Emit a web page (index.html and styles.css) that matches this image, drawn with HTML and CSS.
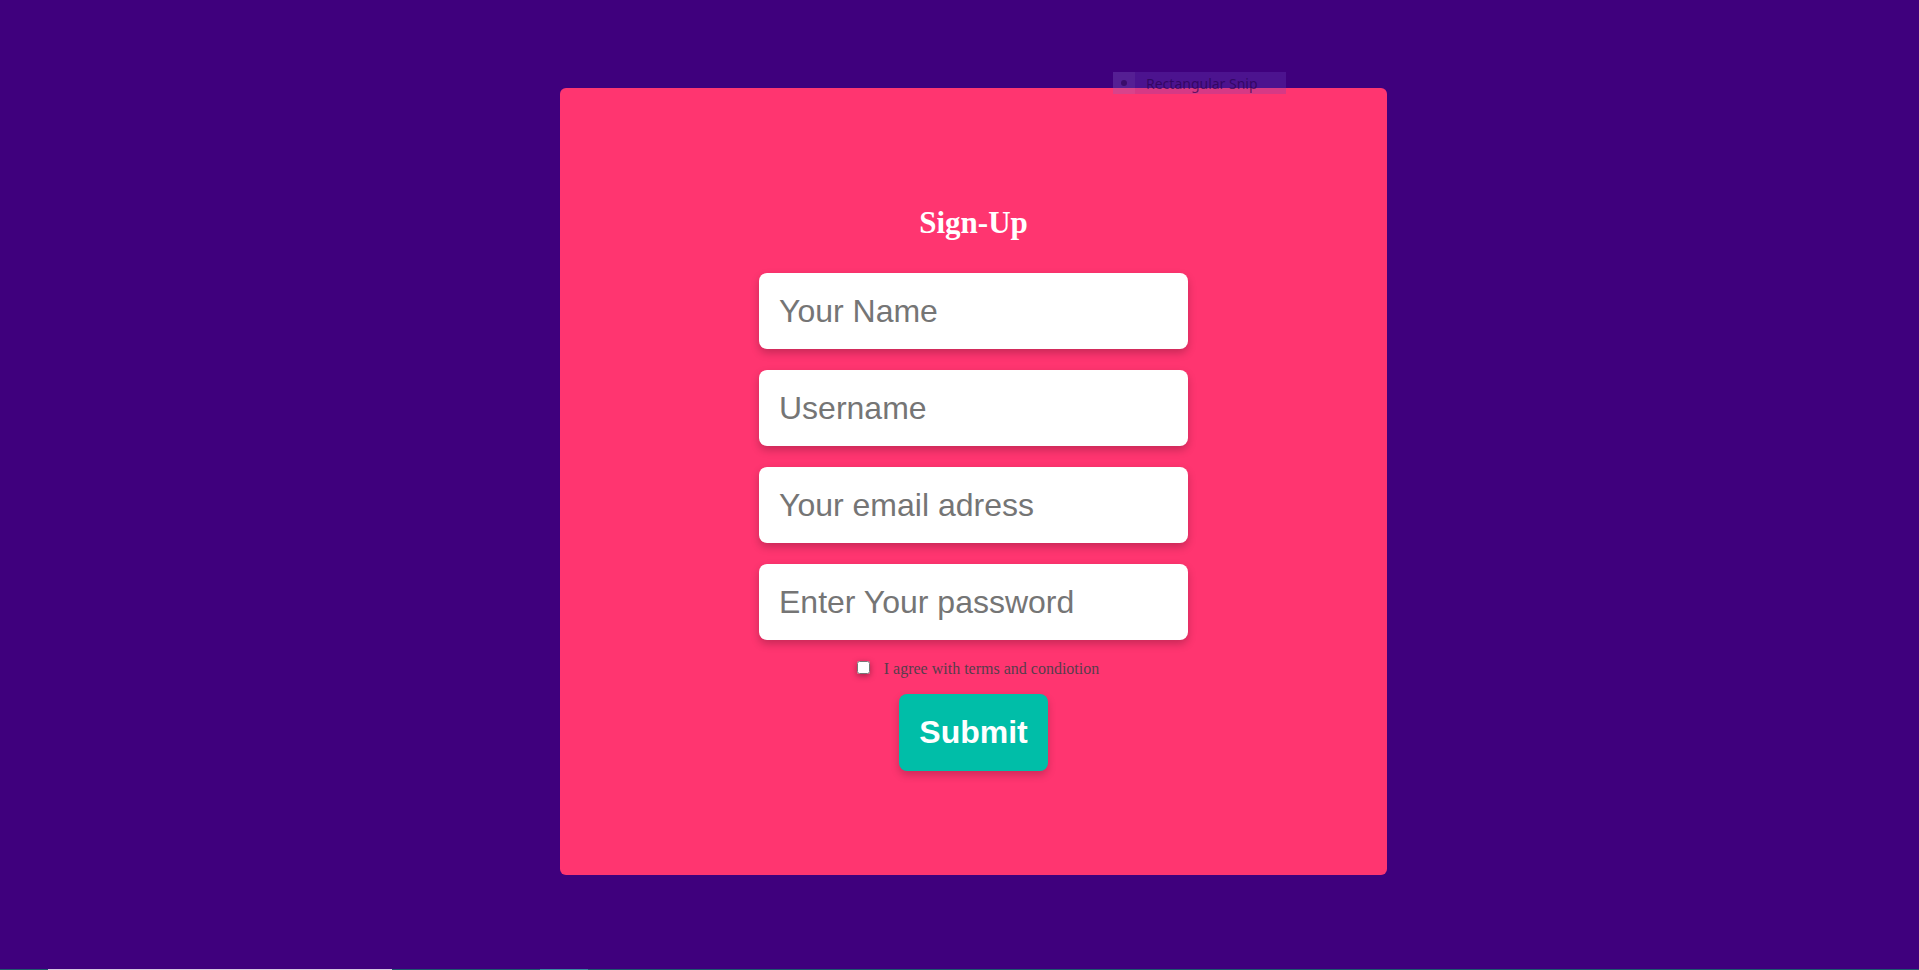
FILE: index.html
```html
<!DOCTYPE html>
<html lang="en">
<head>
<meta charset="utf-8">
<title>Sign-Up</title>
<link rel="stylesheet" href="styles.css">
</head>
<body>
<div class="page">
  <main class="stage">
    <form class="card" onsubmit="return false">
      <h2 class="title">Sign-Up</h2>
      <input class="field" type="text" placeholder="Your Name">
      <input class="field" type="text" placeholder="Username">
      <input class="field" type="email" placeholder="Your email adress">
      <input class="field" type="password" placeholder="Enter Your password">
      <label class="agree"><input class="check" type="checkbox"><span>I agree with terms and condiotion</span></label>
      <button class="submit" type="submit">Submit</button>
    </form>
  </main>
  <div class="taskbar-edge"></div>
</div>
<div class="snip"><span class="snip-icon"><span class="snip-dot"></span></span><span class="snip-text">Rectangular Snip</span></div>
</body>
</html>
```
FILE: styles.css
```css
html, body {
  margin: 0;
  padding: 0;
}
body {
  background: #3f007d;
  font-family: "Liberation Serif", "Times New Roman", serif;
}
.page {
  height: 970px;
  display: flex;
  flex-direction: column;
  overflow: hidden;
}
.stage {
  flex: 1;
  padding: 88px 0 0 560px;
}
.card {
  box-sizing: border-box;
  width: 827px;
  height: 787px;
  background: #ff3570;
  border-radius: 6px;
  padding-top: 118px;
  display: flex;
  flex-direction: column;
  align-items: center;
}
.title {
  margin: 0 0 33px;
  font-family: "Liberation Serif", "Times New Roman", serif;
  font-weight: bold;
  font-size: 31px;
  line-height: 34px;
  color: #ffffff;
}
.field {
  box-sizing: border-box;
  width: 429px;
  height: 76px;
  margin: 0 0 21px;
  padding: 0 20px;
  border: none;
  border-radius: 8px;
  background: #ffffff;
  font-family: "Liberation Sans", Arial, sans-serif;
  font-size: 32px;
  color: #333;
  box-shadow: 0 4px 8px rgba(0, 0, 0, 0.22);
  outline: none;
}
.field::placeholder {
  color: #757575;
}
.field:nth-of-type(4) {
  margin-bottom: 20px;
}
.agree {
  display: flex;
  align-items: baseline;
  gap: 14px;
  margin-left: 9px;
  height: 20px;
  font-size: 16px;
  line-height: 18px;
  color: #573d4c;
}
.check {
  width: 13px;
  height: 13px;
  margin: 0;
  box-shadow: 0 2px 6px rgba(0, 0, 0, 0.35);
}
.submit {
  margin-top: 14px;
  padding: 20px 20px;
  border: none;
  border-radius: 8px;
  background: #00bea8;
  color: #ffffff;
  font-family: "Liberation Sans", Arial, sans-serif;
  font-weight: bold;
  font-size: 32px;
  line-height: 37px;
  box-shadow: 0 4px 8px rgba(0, 0, 0, 0.2);
  cursor: pointer;
}
.taskbar-edge {
  height: 1px;
  background: linear-gradient(to right,
    #1f5c6e 0, #1f5c6e 48px,
    #d8c8e0 48px, #d8c8e0 392px,
    #1e5870 392px, #1e5870 540px,
    #3a8aa0 540px, #3a8aa0 588px,
    #1e5870 588px, #1e5870 100%);
}
.snip {
  position: absolute;
  top: 72px;
  left: 1113px;
  width: 173px;
  height: 22px;
  display: flex;
  align-items: center;
  background: rgba(110, 70, 190, 0.28);
  font-family: "Noto Sans", "Open Sans", sans-serif;
  font-size: 14px;
  color: rgba(40, 0, 80, 0.7);
}
.snip-icon {
  width: 22px;
  height: 22px;
  display: flex;
  align-items: center;
  justify-content: center;
  background: rgba(255, 255, 255, 0.05);
  margin-right: 11px;
}
.snip-dot {
  width: 6px;
  height: 6px;
  border-radius: 50%;
  background: rgba(40, 0, 80, 0.6);
}
.snip-text {
  white-space: nowrap;
}
```
